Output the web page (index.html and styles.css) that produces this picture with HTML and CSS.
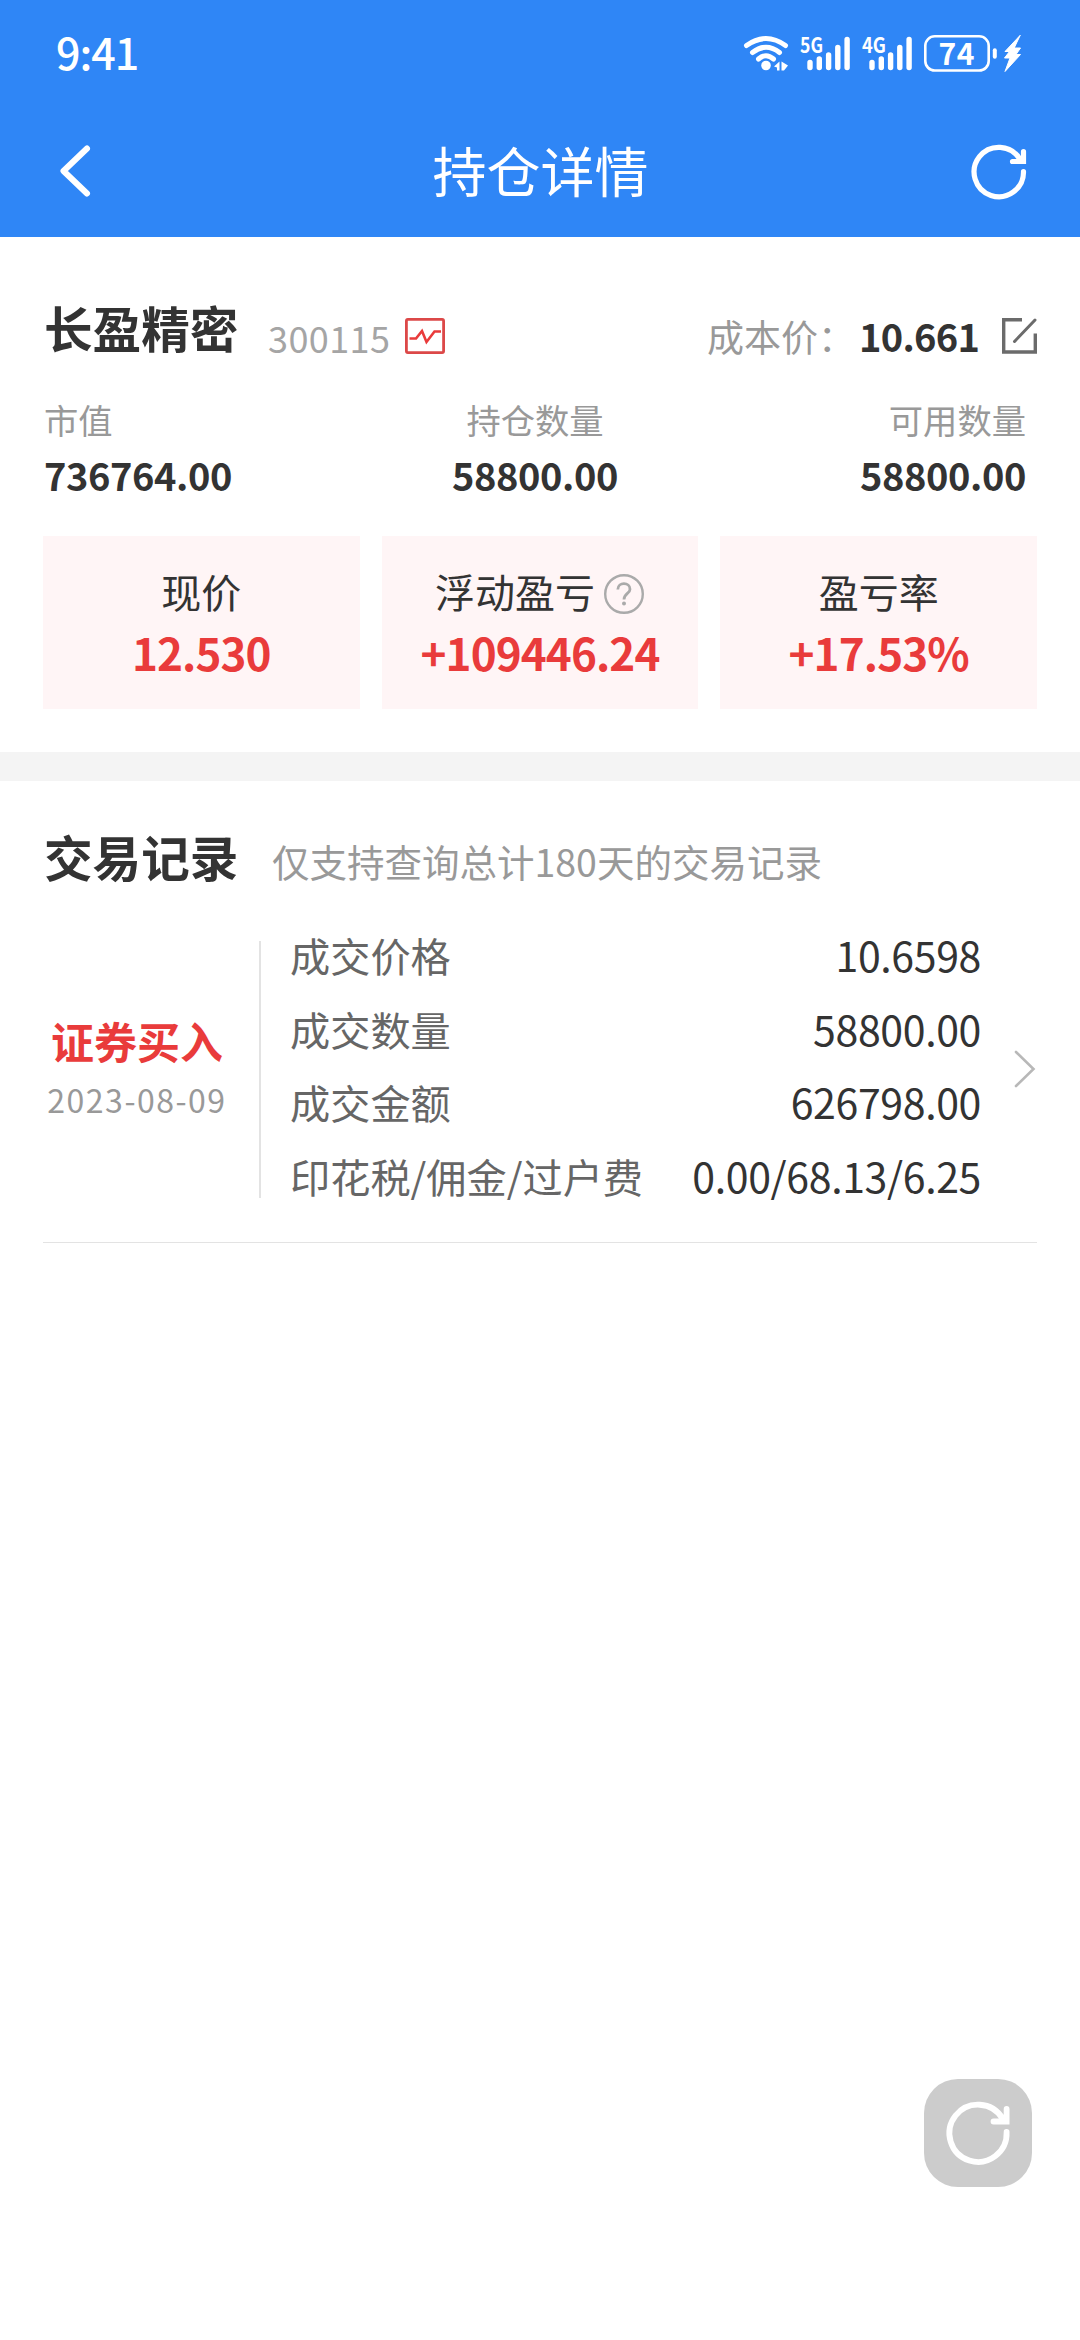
FILE: index.html
```html
<!DOCTYPE html>
<html lang="zh-CN">
<head>
<meta charset="utf-8">
<title>持仓详情</title>
<link rel="stylesheet" href="styles.css">
</head>
<body>
<header class="top">
  <div class="status">
    <span class="clock">9:41</span>
    <svg class="status-icons" width="280" height="60" viewBox="742 20 280 60" fill="none" stroke="#fff" stroke-linecap="round">
      <g stroke-width="5">
        <path d="M746.5 45.500Q766 31.500 785.500 45.500"/>
        <path d="M752.500 52.500Q766 42 779.500 52.500"/>
        <path d="M758.500 59Q766 52.500 773.500 59"/>
      </g>
      <g fill="#fff" stroke="none">
        <circle cx="766" cy="65.500" r="4.800"/>
        <path d="M774 66.500 779.500 61.500V70.500H777V67.500ZM781.500 61.500 788 65.500 784 70.500H781.500Z"/>
      </g>
      <g stroke-width="5.400">
        <path d="M810 62.500V67.500M819.300 59V67.500M828.600 55V67.500M837.800 47.500V67.500M847.100 39.500V67.500"/>
        <path d="M872 62.500V67.500M881.300 59V67.500M890.600 55V67.500M899.800 47.500V67.500M909.100 39.500V67.500"/>
      </g>
      <rect x="925.300" y="36.300" width="63.400" height="34.200" rx="9.500" stroke-width="2.600"/>
      <path d="M994.800 50.300V56.700" stroke-width="4"/>
      <path d="M1020 35.500 1005 51.500H1009.500L1004.500 58H1010L1005 71.500 1020.500 54.500H1016L1020.500 48H1014.500Z" fill="#fff" stroke-width="1" stroke-linejoin="round"/>
      <g class="status-text" fill="#fff" stroke="none">
        <text x="800" y="53" textLength="23" lengthAdjust="spacingAndGlyphs">5G</text>
        <text x="862" y="53" textLength="24" lengthAdjust="spacingAndGlyphs">4G</text>
        <text class="charge" x="938.500" y="65" textLength="36">74</text>
      </g>
    </svg>
  </div>
  <nav class="nav">
    <svg width="36" height="60" viewBox="57 141 36 60" fill="none" stroke="#fff" stroke-width="6" stroke-linecap="round" stroke-linejoin="round"><path d="M87 148.500 63.500 171 87 193.500"/></svg>
    <h1>持仓详情</h1>
    <svg width="60" height="60" viewBox="969 141 60 60" fill="none" stroke="#fff" stroke-width="5.200" stroke-linecap="round"><path d="M1023.500 171.500A24.700 24.700 0 1 1 1019.800 159M1023.500 151.500V161.500H1012.500"/></svg>
  </nav>
</header>

<section class="summary">
  <div class="stock">
    <h2>长盈精密</h2>
    <span class="code">300115</span>
    <svg class="chart" width="40" height="36" viewBox="0 0 40 36" fill="none" stroke="#dc4848"><rect x="1.400" y="1.400" width="37.200" height="33.200" rx="1.500" stroke-width="2.800"/><path d="M4.500 20.500H11L17 13 21.500 24 29.500 13.500H36" stroke-width="2.600" stroke="#e93b3b"/></svg>
    <span class="cost-label">成本价：</span>
    <b class="cost">10.661</b>
    <svg class="edit" width="35" height="36" viewBox="0 0 35 36" fill="none" stroke="#6b6b6b" stroke-width="3.400"><path d="M20 1.700H1.700V34H33.300V15.500"/><path d="M12.500 23.500 33 2" stroke-linecap="round" stroke-width="3"/></svg>
  </div>
  <dl class="figures">
    <div><dt>市值</dt><dd>736764.00</dd></div>
    <div><dt>持仓数量</dt><dd>58800.00</dd></div>
    <div><dt>可用数量</dt><dd>58800.00</dd></div>
  </dl>
  <dl class="cards">
    <div><dt>现价</dt><dd>12.530</dd></div>
    <div><dt>浮动盈亏<svg class="help" width="42" height="42" viewBox="0 0 42 42" fill="none" stroke="#aaa"><circle cx="21" cy="21" r="18.800" stroke-width="2.400"/><path d="M14.800 16.500C15 8.500 27 9 27 16.200 27 20.500 21 20.500 21 26.500" stroke-width="2.800"/><circle cx="21" cy="30.500" r="2" fill="#aaa" stroke="none"/></svg></dt><dd>+109446.24</dd></div>
    <div><dt>盈亏率</dt><dd>+17.53%</dd></div>
  </dl>
</section>

<section class="records">
  <div class="records-head">
    <h2>交易记录</h2>
    <span>仅支持查询总计180天的交易记录</span>
  </div>
  <article class="record">
    <div class="side">
      <b>证券买入</b>
      <time>2023-08-09</time>
    </div>
    <dl class="details">
      <div><dt>成交价格</dt><dd>10.6598</dd></div>
      <div><dt>成交数量</dt><dd>58800.00</dd></div>
      <div><dt>成交金额</dt><dd>626798.00</dd></div>
      <div><dt>印花税/佣金/过户费</dt><dd>0.00/68.13/6.25</dd></div>
    </dl>
    <svg class="more" width="24" height="40" viewBox="0 0 24 40" fill="none" stroke="#b8b8b8" stroke-width="2.600" stroke-linecap="round"><path d="M3 3 20.500 20 3 37"/></svg>
  </article>
</section>

<button class="fab" aria-label="刷新">
  <svg width="108" height="108" viewBox="924 2079 108 108" fill="none" stroke="#fff" stroke-width="5.800" stroke-linecap="round"><path d="M1006.600 2132A28.600 28.600 0 1 1 1002.500 2118.500M1006.600 2109V2121.500H993.500"/></svg>
</button>
</body>
</html>
```
FILE: styles.css
```css
* {
  box-sizing: border-box;
  margin: 0;
  padding: 0;
}

body {
  position: relative;
  width: 1080px;
  height: 2340px;
  overflow: hidden;
  background: #fff;
  color: #333;
  font-family: "Noto Sans CJK SC", "Noto Sans", sans-serif;
}

svg {
  display: block;
  flex: none;
}

h1, h2, b, span, dt, dd, time {
  white-space: nowrap;
}

.top {
  height: 237px;
  background: #2f86f6;
  color: #fff;
}

.status {
  display: flex;
  justify-content: space-between;
  height: 105px;
  padding: 20px 58px 0 56px;
}

.clock {
  font-size: 43px;
  line-height: 62px;
  font-weight: 500;
  letter-spacing: -1px;
}

.status-text {
  font-size: 21px;
  font-weight: 700;
}

.status-text .charge {
  font-size: 30px;
}

.nav {
  display: flex;
  justify-content: space-between;
  align-items: center;
  height: 132px;
  padding: 0 51px 0 57px;
}

.nav h1 {
  font-size: 54px;
  line-height: 60px;
  font-weight: 400;
  padding: 0 0 3px 19px;
}

.summary {
  height: 515px;
  padding: 57px 43px 0;
}

.stock {
  display: flex;
  height: 93px;
}

.stock h2 {
  width: 225px;
  padding-left: 1px;
  font-size: 48.600px;
  line-height: 66px;
}

.code {
  width: 137px;
  font-size: 36px;
  line-height: 87px;
  letter-spacing: 0.400px;
  color: #a5a5a5;
}

.chart,
.edit {
  margin-top: 24px;
}

.cost-label {
  margin-left: auto;
  width: 152px;
  font-size: 37px;
  line-height: 84px;
  color: #999;
}

.cost {
  width: 143px;
  font-size: 38px;
  line-height: 84px;
  letter-spacing: -0.700px;
}

.figures {
  display: grid;
  grid-template-columns: 1fr 1fr 1fr;
  padding: 0 11px 0 1px;
  height: 149px;
}

.figures div:nth-child(2) {
  text-align: center;
}

.figures div:nth-child(3) {
  text-align: right;
}

.figures dt {
  font-size: 34.300px;
  line-height: 64px;
  color: #999;
}

.figures dd {
  font-size: 38px;
  line-height: 47px;
  font-weight: 700;
  letter-spacing: -0.400px;
}

.cards {
  display: grid;
  grid-template-columns: 1fr 1fr 1fr;
  gap: 22px;
}

.cards div {
  height: 173px;
  padding-top: 25px;
  background: #fff5f6;
  text-align: center;
}

.cards dt {
  display: flex;
  justify-content: center;
  align-items: center;
  font-size: 40px;
  line-height: 60px;
}

.help {
  margin: 6px 0 0 8px;
}

.cards dd {
  font-size: 44px;
  line-height: 63px;
  font-weight: 700;
  letter-spacing: -0.900px;
  color: #e93b3b;
}

.records {
  border-top: 29px solid #f4f4f4;
  padding: 0 43px;
}

.records-head {
  display: flex;
  height: 138px;
  padding-top: 45px;
}

.records-head h2 {
  width: 229px;
  padding-left: 1px;
  font-size: 48.600px;
  line-height: 61px;
}

.records-head span {
  font-size: 37.500px;
  line-height: 70px;
  color: #999;
}

.record {
  display: flex;
  height: 324px;
  border-bottom: 1px solid #e3e3e3;
}

.side {
  width: 218px;
  height: 257px;
  margin-top: 22px;
  padding: 69px 28px 0 0;
  border-right: 2px solid #e3e3e3;
  display: flex;
  flex-direction: column;
  align-items: center;
}

.side b {
  font-size: 43px;
  line-height: 61px;
  color: #e93b3b;
}

.side time {
  font-size: 32px;
  line-height: 57px;
  letter-spacing: 1.500px;
  color: #999;
}

.details {
  width: 691px;
  padding-left: 29px;
}

.details div {
  display: flex;
  justify-content: space-between;
  height: 73.500px;
  line-height: 71px;
}

.details dt {
  font-size: 40.200px;
  color: #666;
}

.details dd {
  margin-right: -29px;
  font-size: 41px;
  letter-spacing: -0.350px;
}

.more {
  margin: 130px 0 0 61px;
}

.fab {
  position: absolute;
  left: 924px;
  top: 2079px;
  width: 108px;
  height: 108px;
  border: 0;
  border-radius: 34px;
  background: #ccc;
}
```
